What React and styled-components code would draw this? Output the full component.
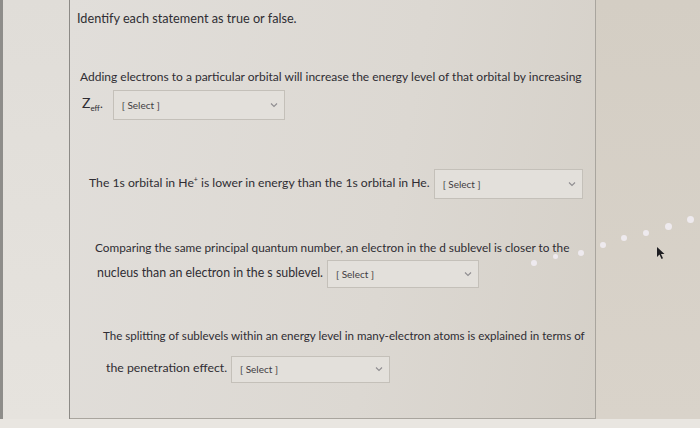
import React from 'react';
import styled, { createGlobalStyle } from 'styled-components';

const Global = createGlobalStyle`
  html, body {
    margin: 0;
    padding: 0;
    width: 700px;
    height: 428px;
    overflow: hidden;
    background: #e9e6e1;
    font-family: Lato, "Open Sans", sans-serif;
  }
`;

const Screen = styled.div`
  position: relative;
  width: 700px;
  height: 428px;
  display: flex;
  flex-direction: column;
  background: #e9e6e1;
`;

const Top = styled.div`
  display: flex;
  height: 419px;
`;

const Sidebar = styled.div`
  width: 70px;
  flex-shrink: 0;
  border-left: 3px solid #8e8d8a;
  border-right: 1px solid #8c8a86;
  background: linear-gradient(180deg, #e0ddd8 0%, #e6e3de 100%);
  box-sizing: border-box;
`;

const Panel = styled.div`
  width: 526px;
  flex-shrink: 0;
  box-sizing: border-box;
  border-right: 1px solid #a9a59e;
  border-bottom: 1px solid #a9a59e;
  background: linear-gradient(100deg, #e1deda 0%, #dcd8d2 60%, #d5d0c8 100%);
  padding-top: 8px;
  color: #2f2d33;
`;

const Outside = styled.div`
  flex: 1;
  background: linear-gradient(180deg, #d4cec4 0%, #d9d3ca 100%);
`;

const Title = styled.div`
  padding-left: 7px;
  font-size: 12.7px;
  line-height: 20px;
`;

const Question = styled.p`
  margin: ${(p) => p.top}px 0 0;
  padding-left: ${(p) => p.indent}px;
  font-size: ${(p) => p.fs || 12}px;
  line-height: ${(p) => p.lh || 26}px;
  white-space: nowrap;
`;

const Tail = styled.span`
  font-size: ${(p) => p.fs}px;
  margin-left: ${(p) => p.shift || 0}px;
`;

const Sub = styled.sub`
  font-size: 8px;
  vertical-align: -3px;
  line-height: 0;
`;

const Sup = styled.sup`
  font-size: 7px;
  line-height: 0;
`;

const Zed = styled.span`
  font-size: 14px;
`;

const Select = styled.span`
  display: inline-flex;
  align-items: center;
  justify-content: space-between;
  box-sizing: border-box;
  width: ${(p) => p.w}px;
  height: ${(p) => p.h || 30}px;
  margin-left: ${(p) => p.ml || 4}px;
  padding: 0 6px 0 8px;
  vertical-align: middle;
  border: 1px solid #c4c0b9;
  background: #e3e0db;
  font-size: 10px;
  color: #3f3d42;
  line-height: 1;
`;

const Chevron = () => (
  <svg width="8" height="6" viewBox="0 0 8 6">
    <path d="M1 1.5 L4 4.5 L7 1.5" fill="none" stroke="#8f8d90" strokeWidth="1.1" />
  </svg>
);

const Dot = styled.span`
  position: absolute;
  width: ${(p) => p.s}px;
  height: ${(p) => p.s}px;
  border-radius: 50%;
  background: rgba(244, 240, 248, 0.8);
`;

const Cursor = styled.svg`
  position: absolute;
  left: 656px;
  top: 246px;
`;

function Dropdown({ w, h, ml }) {
  return (
    <Select w={w} h={h} ml={ml}>
      <span>[ Select ]</span>
      <Chevron />
    </Select>
  );
}

const dots = [
  [578, 250, 6],
  [600, 242, 6],
  [621, 235, 6],
  [643, 230, 6],
  [665, 223, 7],
  [687, 216, 7],
  [531, 260, 6],
  [553, 254, 5],
];

export default function App() {
  return (
    <Screen>
      <Global />
      <Top>
        <Sidebar />
        <Panel>
          <Title>Identify each statement as true or false.</Title>
          <Question top={36} indent={10}>
            Adding electrons to a particular orbital will increase the energy level of that orbital by increasing
            <br />
            <Tail fs={12} shift={2}>
              <Zed>Z</Zed>
              <Sub>eff</Sub>.
            </Tail>
            <Dropdown w={172} ml={10} />
          </Question>
          <Question top={49} indent={19} fs={12.2}>
            The 1s orbital in He<Sup>+</Sup> is lower in energy than the 1s orbital in He.
            <Dropdown w={149} />
          </Question>
          <Question top={36} indent={25} fs={11.8} lh={25}>
            Comparing the same principal quantum number, an electron in the d sublevel is closer to the
            <br />
            <Tail fs={12.4} shift={2}>nucleus than an electron in the s sublevel.</Tail>
            <Dropdown w={152} h={28} />
          </Question>
          <Question top={32} indent={33} fs={11.6} lh={32}>
            The splitting of sublevels within an energy level in many-electron atoms is explained in terms of
            <br />
            <Tail fs={12.3} shift={3}>the penetration effect.</Tail>
            <Dropdown w={159} h={27} />
          </Question>
        </Panel>
        <Outside />
      </Top>
      {dots.map(([x, y, s], i) => (
        <Dot key={i} s={s} style={{ left: x, top: y }} />
      ))}
      <Cursor width="10" height="14" viewBox="0 0 10 14">
        <path d="M1 1 L1 11 L3.5 8.5 L5.5 13 L7 12.3 L5 8 L8.5 8 Z" fill="#1e1e22" />
      </Cursor>
    </Screen>
  );
}
